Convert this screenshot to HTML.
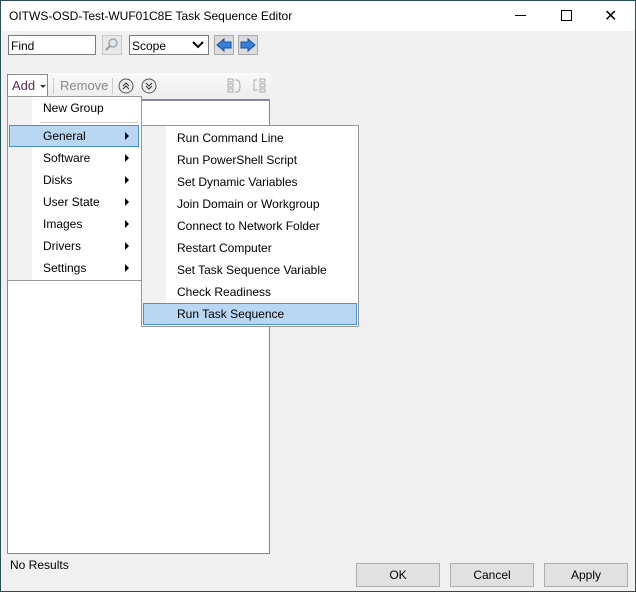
<!DOCTYPE html>
<html><head><style>
*{margin:0;padding:0;box-sizing:border-box}
body{width:636px;height:592px;background:#f0f0f0;font-family:"Liberation Sans",sans-serif;font-size:12px;color:#000;position:relative;overflow:hidden}
.a{position:absolute}
.mi{position:absolute;left:34px;font-size:12px}
.si{position:absolute;left:34px;font-size:12px}
.ar{position:absolute;left:117px;width:0;height:0;border-top:4px solid transparent;border-bottom:4px solid transparent;border-left:4px solid #000}
.btn{position:absolute;top:563px;height:24px;width:84px;background:#e1e1e1;border:1px solid #adadad;text-align:center;line-height:22px}
</style></head><body>
<div class="a" style="left:0;top:0;width:636px;height:592px;border:1px solid #2a4f50"></div>
<div class="a" style="left:1px;top:1px;width:634px;height:30px;background:#fff"></div>
<div class="a" style="left:9px;top:9px;font-size:12px">OITWS-OSD-Test-WUF01C8E Task Sequence Editor</div>
<div class="a" style="left:515px;top:15px;width:11px;height:1px;background:#000"></div>
<div class="a" style="left:561px;top:10px;width:11px;height:11px;border:1px solid #000"></div>
<div class="a" style="left:604px;top:6px;font-size:16px">✕</div>
<div class="a" style="left:8px;top:35px;width:88px;height:20px;background:#fff;border:1px solid #7a7a7a;padding:3px 2px">Find</div>
<div class="a" style="left:102px;top:35px;width:20px;height:20px;background:#e8e8e8;border:1px solid #c8c8c8"><svg width="18" height="18"><circle cx="10" cy="7" r="4" fill="#dfe8f0" stroke="#9aa" stroke-width="1.5"/><path d="M7 10l-4 4" stroke="#999" stroke-width="2"/></svg></div>
<div class="a" style="left:129px;top:35px;width:80px;height:20px;background:#fff;border:1px solid #7a7a7a;padding:3px 2px">Scope<svg class="a" style="left:62px;top:5px" width="12" height="8"><path d="M1 1l5 5 5-5" stroke="#000" stroke-width="2" fill="none"/></svg></div>
<div class="a" style="left:214px;top:35px;width:20px;height:20px;background:#dcdcdc;border:1px solid #aaa"><svg width="18" height="18"><path d="M2 9l7-6v3h7v6H9v3z" fill="#3a7fd8" stroke="#1a4fa0"/></svg></div>
<div class="a" style="left:238px;top:35px;width:20px;height:20px;background:#dcdcdc;border:1px solid #aaa"><svg width="18" height="18"><path d="M16 9l-7-6v3H2v6h7v3z" fill="#3a7fd8" stroke="#1a4fa0"/></svg></div>
<div class="a" style="left:7px;top:73px;width:263px;height:28px;background:linear-gradient(#fafafa,#ececec);border-radius:3px 3px 0 0;border-bottom:2px solid #8a8696"></div>
<div class="a" style="left:7px;top:74px;width:41px;height:24px;border:1px solid #888;border-bottom:none;background:#fff"></div>
<div class="a" style="left:12px;top:78px;color:#5a2a5a;font-size:13px">Add</div>
<div class="a" style="left:40px;top:85px;border-left:3px solid transparent;border-right:3px solid transparent;border-top:3px solid #333"></div>
<div class="a" style="left:53px;top:78px;width:1px;height:16px;background:#ccc"></div>
<div class="a" style="left:60px;top:78px;color:#888;font-size:13px">Remove</div>
<div class="a" style="left:112px;top:78px;width:1px;height:16px;background:#ccc"></div>
<svg class="a" style="left:117px;top:77px" width="44" height="18"><circle cx="9" cy="9" r="7" fill="#eee" stroke="#555"/><path d="M6 9l3-3 3 3M6 12l3-3 3 3" stroke="#333" fill="none"/><circle cx="32" cy="9" r="7" fill="#eee" stroke="#555"/><path d="M29 6l3 3 3-3M29 9l3 3 3-3" stroke="#333" fill="none"/></svg>
<svg class="a" style="left:226px;top:77px" width="42" height="18"><g stroke="#aaa" fill="none"><rect x="2" y="2" width="5" height="3"/><rect x="2" y="7" width="5" height="3"/><rect x="2" y="12" width="5" height="3"/><path d="M9 3h2q3 0 3 6t-3 6H9"/><rect x="34" y="2" width="5" height="3"/><rect x="34" y="7" width="5" height="3"/><rect x="34" y="12" width="5" height="3"/><path d="M31 3h-3v10h4"/></g></svg>
<div class="a" style="left:7px;top:101px;width:263px;height:453px;background:#fff;border:1px solid #828790;border-top:none"></div>
<div class="a" style="left:10px;top:558px">No Results</div>
<div class="a" style="left:7px;top:96px;width:135px;height:185px;background:#f2f2f2;border:1px solid #979797"></div>
<div class="a" style="left:32px;top:97px;width:109px;height:183px;background:#fff"></div>
<div class="a" style="left:40px;top:122px;width:98px;height:1px;background:#ccc"></div>
<div class="mi" style="left:43px;top:101px">New Group</div>
<div class="a" style="left:9px;top:125px;width:130px;height:22px;background:#b9d6f2;border:1px solid #4b8fd6"></div>
<div class="mi" style="left:43px;top:129px">General</div><div class="ar" style="left:125px;top:132px"></div>
<div class="mi" style="left:43px;top:151px">Software</div><div class="ar" style="left:125px;top:154px"></div>
<div class="mi" style="left:43px;top:173px">Disks</div><div class="ar" style="left:125px;top:176px"></div>
<div class="mi" style="left:43px;top:195px">User State</div><div class="ar" style="left:125px;top:198px"></div>
<div class="mi" style="left:43px;top:217px">Images</div><div class="ar" style="left:125px;top:220px"></div>
<div class="mi" style="left:43px;top:239px">Drivers</div><div class="ar" style="left:125px;top:242px"></div>
<div class="mi" style="left:43px;top:261px">Settings</div><div class="ar" style="left:125px;top:264px"></div>
<div class="a" style="left:141px;top:125px;width:218px;height:202px;background:#f2f2f2;border:1px solid #979797"></div>
<div class="a" style="left:166px;top:126px;width:192px;height:200px;background:#fff"></div>
<div class="a" style="left:143px;top:303px;width:214px;height:22px;background:#b9d6f2;border:1px solid #4b8fd6"></div>
<div class="si" style="left:177px;top:131px">Run Command Line</div>
<div class="si" style="left:177px;top:153px">Run PowerShell Script</div>
<div class="si" style="left:177px;top:175px">Set Dynamic Variables</div>
<div class="si" style="left:177px;top:197px">Join Domain or Workgroup</div>
<div class="si" style="left:177px;top:219px">Connect to Network Folder</div>
<div class="si" style="left:177px;top:241px">Restart Computer</div>
<div class="si" style="left:177px;top:263px">Set Task Sequence Variable</div>
<div class="si" style="left:177px;top:285px">Check Readiness</div>
<div class="si" style="left:177px;top:307px">Run Task Sequence</div>
<div class="btn" style="left:356px">OK</div>
<div class="btn" style="left:450px">Cancel</div>
<div class="btn" style="left:544px">Apply</div>
</body></html>
